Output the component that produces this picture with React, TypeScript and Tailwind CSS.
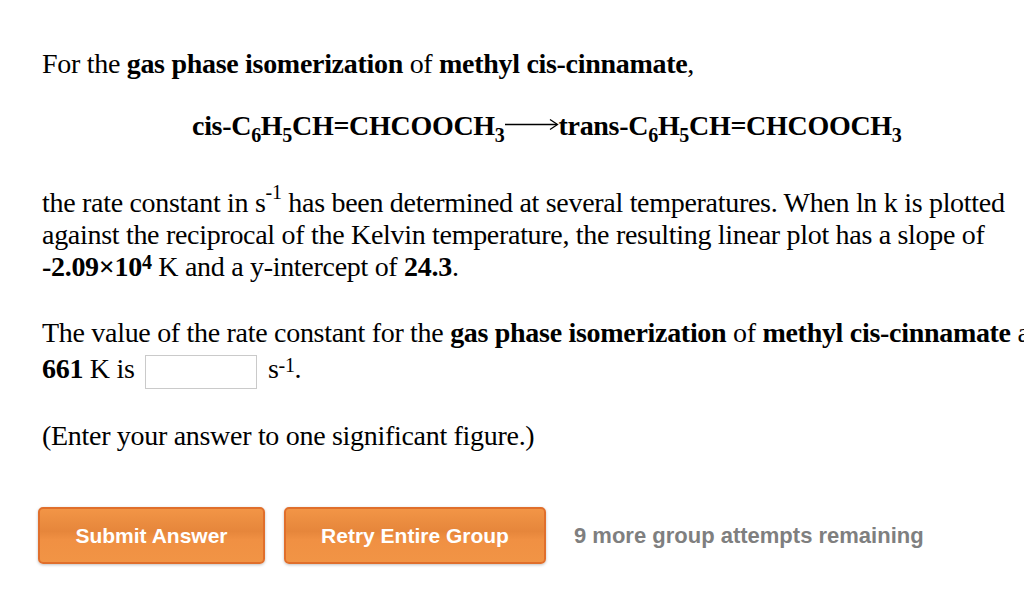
import React from 'react';

const serif = { fontFamily: '"Liberation Serif", "Times New Roman", serif' };
const sans = { fontFamily: '"Liberation Sans", Arial, sans-serif' };

const Sub = ({ children }: { children: React.ReactNode }) => (
  <span className="text-[20px] leading-[0px] align-[-7px]">{children}</span>
);

const Arrow = () => (
  <svg width="54" height="14" viewBox="0 0 54 14" className="inline-block align-[4px]">
    <path d="M0 7.5H52" stroke="#000" strokeWidth="1.3" />
    <path d="M45 2.5L52.5 7.5L45 12.5" stroke="#000" strokeWidth="1.3" fill="none" />
  </svg>
);

const btn =
  'h-[57px] rounded-[5px] border-2 border-[#e06f2c] bg-[linear-gradient(#f29546,#e6863b_42%,#f09043_58%,#f19445)] text-white font-bold text-[21px] shadow-[0_1px_3px_rgba(0,0,0,0.25)]';

export default function App() {
  return (
    <div className="w-[1024px] h-[596px] overflow-hidden bg-white text-black" style={serif}>
      <div className="w-[1020px] ml-[42px] pt-[48px] text-[28px] leading-[32px] tracking-[-0.3px]">
        <p>
          For the <b>gas phase isomerization</b> of <b>methyl cis-cinnamate</b>,
        </p>

        <p className="mt-[30px] pl-[150px] font-bold whitespace-nowrap">
          cis-C<Sub>6</Sub>H<Sub>5</Sub>CH=CHCOOCH<Sub>3</Sub>
          <Arrow />
          trans-C<Sub>6</Sub>H<Sub>5</Sub>CH=CHCOOCH<Sub>3</Sub>
        </p>

        <p className="mt-[45px]">
          the rate constant in s<span className="text-[20px] leading-[0px] align-[13px]">-1</span> has been determined at several temperatures. When ln k is plotted
          against the reciprocal of the Kelvin temperature, the resulting linear plot has a slope of{' '}
          <b>-2.09×10<span className="text-[20px] leading-[0px] align-[7px]">4</span></b> K and a y-intercept of <b>24.3</b>.
        </p>

        <p className="mt-[34px]">
          The value of the rate constant for the <b>gas phase isomerization</b> of <b>methyl cis-cinnamate</b> at{' '}
          <b>661</b> K is{' '}
          <input
            type="text"
            className="w-[112px] h-[34px] mt-[6px] mx-[4px] border border-[#cacaca] text-[18px] align-baseline outline-none"
          />{' '}
          s<span className="text-[20px] leading-[0px] align-[6px]">-1</span>.
        </p>

        <p className="mt-[31px]">(Enter your answer to one significant figure.)</p>

        <div className="mt-[55px] -ml-[4px] flex items-center gap-[19px] tracking-normal" style={sans}>
          <button className={`w-[227px] ${btn}`}>Submit Answer</button>
          <button className={`w-[262px] ${btn}`}>Retry Entire Group</button>
          <span className="ml-[9px] text-[22px] font-bold text-[#7f7f7f]">9 more group attempts remaining</span>
        </div>
      </div>
    </div>
  );
}
